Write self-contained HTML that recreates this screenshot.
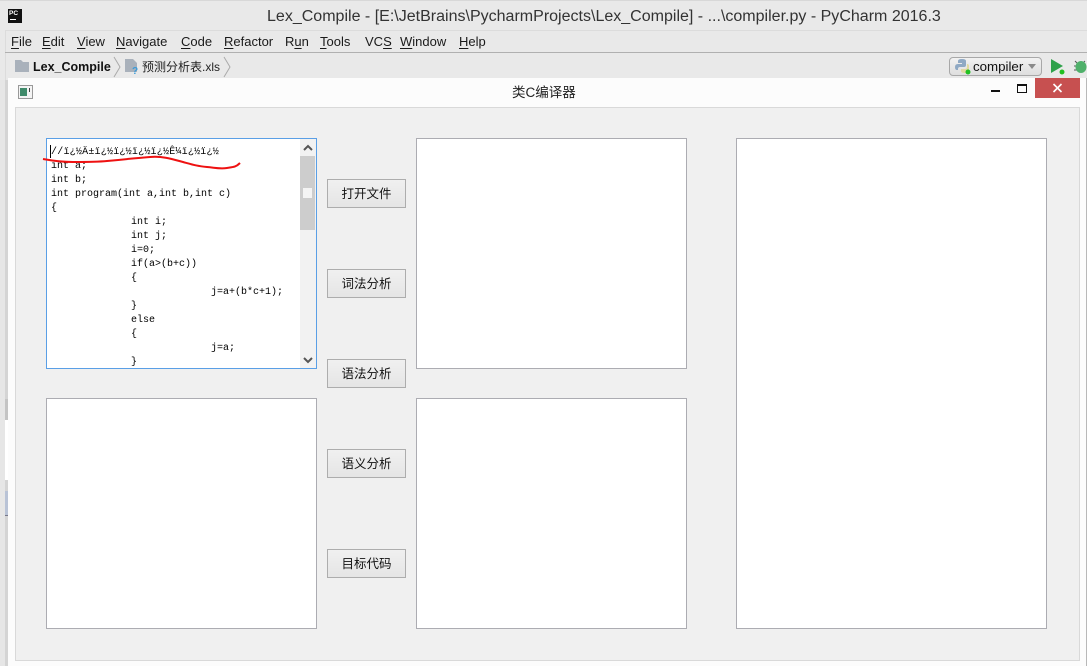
<!DOCTYPE html>
<html><head><meta charset="utf-8"><style>
html,body{margin:0;padding:0}
body{width:1087px;height:666px;overflow:hidden;position:relative;background:#e9e9e9;font-family:"Liberation Sans","Noto Sans CJK SC",sans-serif;color:#111}
.a{position:absolute;box-sizing:border-box}
.t{position:absolute;white-space:pre}
.box{position:absolute;box-sizing:border-box;background:#fff;border:1px solid #acacb2}
.btn{position:absolute;box-sizing:border-box;left:327px;width:79px;height:29px;border:1px solid #adadad;background:linear-gradient(#f0f0f0,#e5e5e5);font-size:12.5px;line-height:28px;text-align:center;color:#111}
.m{position:absolute;top:34px;font-size:13px;line-height:16px;color:#1a1a1a;white-space:pre}
u{text-underline-offset:2px}
.code{position:absolute;left:51px;font:10px/14px "Liberation Mono",monospace;color:#000;white-space:pre;tab-size:80px;-moz-tab-size:80px}
</style></head><body>
<div class="a" style="left:0;top:0;width:1087px;height:1px;background:#d8d8d8"></div>
<div class="a" style="left:8px;top:9px;width:14px;height:14px;background:#111"></div>
<div class="t" style="left:9px;top:9px;font:700 6.5px/9px 'Liberation Sans',sans-serif;color:#fff">PC</div>
<div class="a" style="left:10px;top:19px;width:6px;height:1px;background:#fff"></div>
<div class="t" style="left:267px;top:7px;font-size:16.03px;line-height:18px;color:#333">Lex_Compile - [E:\JetBrains\PycharmProjects\Lex_Compile] - ...\compiler.py - PyCharm 2016.3</div>
<div class="a" style="left:5px;top:30px;width:1082px;height:1px;background:#dcdcdc"></div>
<div class="a" style="left:5px;top:30px;width:1px;height:50px;background:#dcdcdc"></div>
<span class="m" style="left:11px"><u>F</u>ile</span>
<span class="m" style="left:42px"><u>E</u>dit</span>
<span class="m" style="left:77px"><u>V</u>iew</span>
<span class="m" style="left:116px"><u>N</u>avigate</span>
<span class="m" style="left:181px"><u>C</u>ode</span>
<span class="m" style="left:224px"><u>R</u>efactor</span>
<span class="m" style="left:285px">R<u>u</u>n</span>
<span class="m" style="left:320px"><u>T</u>ools</span>
<span class="m" style="left:365px">VC<u>S</u></span>
<span class="m" style="left:400px"><u>W</u>indow</span>
<span class="m" style="left:459px"><u>H</u>elp</span>
<div class="a" style="left:5px;top:52px;width:1082px;height:1px;background:#b0b0b0"></div>
<svg class="a" style="left:15px;top:59px" width="16" height="14"><path d="M0 1h6l2 2h6v10H0z" fill="#a9b1bb"/></svg>
<div class="t" style="left:33px;top:59px;font-size:12.5px;line-height:16px;font-weight:700;color:#111">Lex_Compile</div>
<svg class="a" style="left:113px;top:56px" width="10" height="22"><path d="M1 1l6 10-6 10" fill="none" stroke="#aaa"/></svg>
<svg class="a" style="left:124px;top:57px" width="16" height="18"><path d="M1 2h8l4 4v9H1z" fill="#a9b1bb"/><text x="8" y="17" font-size="10" font-weight="700" fill="#3a9ad9" font-family="Liberation Sans">?</text></svg>
<div class="t" style="left:142px;top:59px;font-size:12px;line-height:16px;color:#222">预测分析表.xls</div>
<svg class="a" style="left:223px;top:56px" width="10" height="22"><path d="M1 1l6 10-6 10" fill="none" stroke="#aaa"/></svg>
<div class="a" style="left:949px;top:57px;width:93px;height:19px;border:1px solid #a8a8a8;border-radius:4px;background:linear-gradient(#f2f2f2,#dedede)"></div>
<svg class="a" style="left:954px;top:58px" width="18" height="17"><path d="M1 9Q1 6 4 6h4V5H4V3q0-2 4-2t4 2v4q0 2-2 2H6q-2 0-2 2v1H3q-2 0-2-3z" fill="#8fa9c4"/><path d="M15 8q0-2-2-2v3q0 2-2 2H7v2q0 2 4 2t4-2z" fill="#e0d9a0"/><circle cx="14" cy="14" r="2.5" fill="#22c022"/></svg>
<div class="t" style="left:973px;top:59px;font-size:13.3px;line-height:16px;color:#111">compiler</div>
<svg class="a" style="left:1027px;top:63px" width="10" height="7"><path d="M1 1h8L5 6z" fill="#8a8a8a"/></svg>
<svg class="a" style="left:1050px;top:58px" width="16" height="18"><path d="M1 1l12 7-12 7z" fill="#2fa14b"/><circle cx="12" cy="14" r="2.5" fill="#22c022"/></svg>
<svg class="a" style="left:1073px;top:58px" width="14" height="17"><path d="M2 3l3 3M12 3l-3 3M1 8h3M1 12h3" stroke="#555"/><ellipse cx="8" cy="9" rx="5.5" ry="6" fill="#4fb06a"/></svg>
<div class="a" style="left:0;top:80px;width:5px;height:586px;background:#e6e6e6"></div>
<div class="a" style="left:5px;top:80px;width:3px;height:586px;background:#d4d4d4"></div>
<div class="a" style="left:5px;top:399px;width:3px;height:21px;background:#c4c4c4"></div>
<div class="a" style="left:5px;top:420px;width:3px;height:60px;background:#fff"></div>
<div class="a" style="left:5px;top:491px;width:3px;height:25px;background:#b9c3d6;border-bottom:1px solid #778"></div>
<div class="a" style="left:8px;top:78px;width:1079px;height:588px;background:#fcfcfc"></div>
<div class="a" style="left:1086px;top:78px;width:1px;height:588px;background:#b8b8b8"></div>
<svg class="a" style="left:18px;top:85px" width="15" height="14"><rect x=".5" y=".5" width="14" height="13" fill="#f4f4f4" stroke="#999"/><rect x="2" y="3" width="7" height="8" fill="#3f8a6a"/><rect x="11" y="3" width="1" height="4" fill="#444"/></svg>
<div class="t" style="left:512px;top:84px;font-size:13.5px;line-height:17px;color:#222">类C编译器</div>
<div class="a" style="left:991px;top:90px;width:9px;height:2px;background:#111"></div>
<div class="a" style="left:1017px;top:84px;width:10px;height:9px;border:1px solid #111;border-top-width:2px"></div>
<div class="a" style="left:1035px;top:78px;width:45px;height:20px;background:#c75050"></div>
<svg class="a" style="left:1052px;top:83px" width="11" height="10"><path d="M1.5 1l8 8M9.5 1l-8 8" stroke="#fff" stroke-width="1.6"/></svg>
<div class="a" style="left:15px;top:107px;width:1065px;height:554px;background:#f0f0f0;border:1px solid #d9d9d9"></div>

<div class="box" style="left:46px;top:138px;width:271px;height:231px;border-color:#5a9fe6;overflow:hidden"></div>
<div class="code" style="top:146px;letter-spacing:.22px">//ï¿½Ä±ï¿½ï¿½ï¿½ï¿½Ê¼ï¿½ï¿½</div>
<div class="code" style="top:160px">int a;
int b;
int program(int a,int b,int c)
{
	int i;
	int j;
	i=0;
	if(a&gt;(b+c))
	{
		j=a+(b*c+1);
	}
	else
	{
		j=a;
	}</div>
<div class="a" style="left:50px;top:145px;width:1px;height:13px;background:#000"></div>
<div class="a" style="left:300px;top:139px;width:16px;height:229px;background:#f2f2f2"></div>
<div class="a" style="left:300px;top:156px;width:15px;height:74px;background:#cdcdcd"></div>
<div class="a" style="left:303px;top:188px;width:9px;height:10px;background:#f4f4f4"></div>
<svg class="a" style="left:303px;top:144px" width="10" height="8"><path d="M1 6l4-4 4 4" fill="none" stroke="#555" stroke-width="2"/></svg>
<svg class="a" style="left:303px;top:356px" width="10" height="8"><path d="M1 2l4 4 4-4" fill="none" stroke="#555" stroke-width="2"/></svg>
<svg class="a" style="left:42px;top:148px" width="202" height="24"><path d="M1 11C12 13 22 14 31 14S55 14 65 13 95 10 108 9 130 11 141 14 155 18 165 19 178 21 185 20 194 19 198 15" fill="none" stroke="#ee1111" stroke-width="2"/></svg>

<div class="box" style="left:46px;top:398px;width:271px;height:231px"></div>
<div class="box" style="left:416px;top:138px;width:271px;height:231px"></div>
<div class="box" style="left:416px;top:398px;width:271px;height:231px"></div>
<div class="box" style="left:736px;top:138px;width:311px;height:491px"></div>

<div class="btn" style="top:179px">打开文件</div>
<div class="btn" style="top:269px">词法分析</div>
<div class="btn" style="top:359px">语法分析</div>
<div class="btn" style="top:449px">语义分析</div>
<div class="btn" style="top:549px">目标代码</div>
</body></html>
